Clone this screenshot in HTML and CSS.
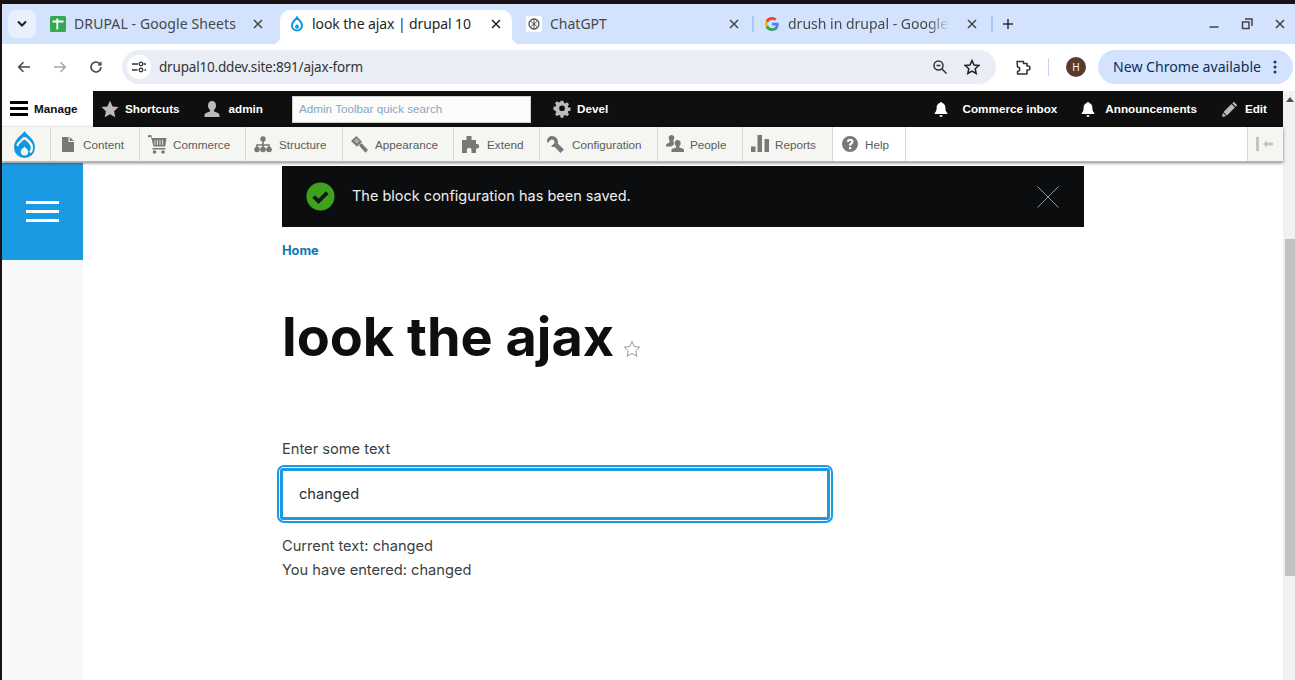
FILE: index.html
```html
<!DOCTYPE html>
<html lang="en">
<head>
<meta charset="utf-8">
<title>look the ajax | drupal 10</title>
<link rel="stylesheet" href="styles.css">
</head>
<body>
<div class="window">
  <header class="tabstrip">
    <button class="tab-search"><svg width="12" height="8" viewBox="0 0 12 8"><path d="M2 1.500l4 4 4-4" fill="none" stroke="#1f1f1f" stroke-width="2"/></svg></button>
    <div class="tab tab-a">
      <svg class="fav" viewBox="0 0 16 16"><rect width="16" height="16" rx="1.500" fill="#34a853"/><path d="M2.500 5.500h11M7.300 2.500v11" stroke="#fff" stroke-width="1.800"/></svg>
      <span class="tab-title">DRUPAL - Google Sheets</span>
      <svg class="tab-x" viewBox="0 0 10 10"><path d="M1 1l8 8M9 1l-8 8" stroke="#444" stroke-width="1.500"/></svg>
    </div>
    <div class="tab tab-b active">
      <svg class="fav" viewBox="0 0 16 16"><path d="M8 1.500c1 2 5 4 5 8a5 5 0 0 1-10 0c0-4 4-6 5-8z" fill="none" stroke="#0f9ae0" stroke-width="2"/><path d="M8 8c.7 1 2 1.500 2 2.800a2 2 0 0 1-4 0C6 9.500 7.300 9 8 8z" fill="#0f9ae0"/></svg>
      <span class="tab-title">look the ajax | drupal 10</span>
      <svg class="tab-x" viewBox="0 0 10 10"><path d="M1 1l8 8M9 1l-8 8" stroke="#222" stroke-width="1.500"/></svg>
    </div>
    <div class="tab tab-c">
      <svg class="fav" viewBox="0 0 16 16"><rect width="16" height="16" rx="2" fill="#fff"/><circle cx="8" cy="8" r="5" fill="none" stroke="#555" stroke-width="1.300"/><path d="M5 5.500l6 5M11 5.500l-6 5M8 3v10" stroke="#555" stroke-width="1"/></svg>
      <span class="tab-title">ChatGPT</span>
      <svg class="tab-x" viewBox="0 0 10 10"><path d="M1 1l8 8M9 1l-8 8" stroke="#444" stroke-width="1.500"/></svg>
    </div>
    <span class="tab-sep"></span>
    <div class="tab tab-d">
      <svg class="fav" viewBox="0 0 16 16"><path d="M14.700 8.200c0-.5 0-1-.1-1.400H8v2.700h3.800a3.200 3.200 0 0 1-1.400 2.100v1.800h2.300c1.300-1.200 2-3 2-5.200z" fill="#4285f4"/><path d="M8 15c1.900 0 3.500-.6 4.700-1.700l-2.300-1.800c-.6.400-1.400.7-2.400.7-1.800 0-3.400-1.200-3.900-2.900H1.700v1.900A7 7 0 0 0 8 15z" fill="#34a853"/><path d="M4.100 9.300a4.200 4.200 0 0 1 0-2.700V4.700H1.700a7 7 0 0 0 0 6.500z" fill="#fbbc05"/><path d="M8 3.800c1 0 2 .4 2.700 1l2-2A7 7 0 0 0 1.700 4.700l2.400 1.900C4.600 5 6.200 3.800 8 3.800z" fill="#ea4335"/></svg>
      <span class="tab-title fade">drush in drupal - Google S</span>
      <svg class="tab-x" viewBox="0 0 10 10"><path d="M1 1l8 8M9 1l-8 8" stroke="#444" stroke-width="1.500"/></svg>
    </div>
    <span class="tab-sep"></span>
    <svg class="new-tab" viewBox="0 0 12 12"><path d="M6 1v10M1 6h10" stroke="#333" stroke-width="1.500"/></svg>
    <div class="win-controls">
      <svg viewBox="0 0 12 12"><path d="M1.500 9h9" stroke="#444" stroke-width="1.500"/></svg>
      <svg viewBox="0 0 12 12"><path d="M4 1h7v7M1.500 4h6.500v6.500H1.500z" fill="none" stroke="#444" stroke-width="1.500"/></svg>
      <svg viewBox="0 0 12 12"><path d="M2 2l8 8M10 2l-8 8" stroke="#444" stroke-width="1.600"/></svg>
    </div>
  </header>

  <nav class="navbar">
    <svg class="nav-btn" viewBox="0 0 16 16"><path d="M14 8H3M7.500 3.200L2.700 8l4.800 4.800" fill="none" stroke="#474747" stroke-width="1.600"/></svg>
    <svg class="nav-btn" viewBox="0 0 16 16"><path d="M2 8h11M8.500 3.200L13.300 8l-4.800 4.800" fill="none" stroke="#a8a8a8" stroke-width="1.600"/></svg>
    <svg class="nav-btn" viewBox="0 0 16 16"><path d="M13 8a5 5 0 1 1-1.500-3.600L13 6" fill="none" stroke="#474747" stroke-width="1.600"/><path d="M13.500 2.300v4.200H9.300z" fill="#474747"/></svg>
    <div class="omnibox">
      <span class="site-chip"><svg viewBox="0 0 14 12" width="14" height="12"><path d="M0 3h6M0 9h5.500M12.500 9H14M11.500 3H14" stroke="#333" stroke-width="1.500"/><circle cx="9" cy="3" r="1.800" fill="none" stroke="#333" stroke-width="1.300"/><circle cx="9" cy="9" r="1.800" fill="none" stroke="#333" stroke-width="1.300"/></svg></span>
      <span class="url">drupal10.ddev.site:891/ajax-form</span>
      <svg class="omni-icon" viewBox="0 0 16 16"><circle cx="6.500" cy="6.500" r="4.500" fill="none" stroke="#333" stroke-width="1.500"/><path d="M10 10l4.500 4.500M4.500 6.500h4" stroke="#333" stroke-width="1.500"/></svg>
      <svg class="omni-icon" viewBox="0 0 16 16"><path d="M8 1.500l2 4.500 4.800.5-3.600 3.200 1 4.800L8 12.100l-4.200 2.400 1-4.800L1.200 6.500 6 6z" fill="none" stroke="#222" stroke-width="1.500"/></svg>
    </div>
    <svg class="ext" viewBox="0 0 16 16"><path d="M2 2.500h6.500V4.500a1.800 1.800 0 0 1 0 0h3.500V7h1a2 2 0 0 1 0 4h-1v4H2.500v-2.500a2.200 2.200 0 0 0 0-4.500z" fill="none" stroke="#333" stroke-width="1.500" stroke-linejoin="round"/></svg>
    <span class="nav-sep"></span>
    <span class="avatar">H</span>
    <div class="update">New Chrome available<svg class="kebab" viewBox="0 0 4 16" width="4" height="16"><circle cx="2" cy="3" r="1.500" fill="#0b3a70"/><circle cx="2" cy="8" r="1.500" fill="#0b3a70"/><circle cx="2" cy="13" r="1.500" fill="#0b3a70"/></svg></div>
  </nav>

  <div class="viewport">
    <div class="page">
      <div class="admin-bar">
        <a class="manage"><svg class="ab-icon" viewBox="0 0 18 15"><path d="M0 1.500h18M0 7.500h18M0 13.500h18" stroke="#000" stroke-width="3" /></svg>Manage</a>
        <a class="ab-item ab-shortcuts"><svg class="ab-icon" viewBox="0 0 18 18"><path d="M9 .8l2.600 5.600 6 .7-4.500 4.100 1.200 6L9 14.200l-5.300 3 1.200-6L.4 7.100l6-.7z" fill="#bbb"/></svg>Shortcuts</a>
        <a class="ab-item ab-admin"><svg class="ab-icon" viewBox="0 0 18 18"><path d="M9 1c2.500 0 4 1.800 4 4.500 0 2-1 3.700-2 4.500v1.500c2 .7 5.500 1.500 5.500 3.500V17H1.500v-2c0-2 3.500-2.800 5.500-3.500V10C6 9.200 5 7.500 5 5.500 5 2.800 6.500 1 9 1z" fill="#bbb"/></svg>admin</a>
        <div class="ab-search">Admin Toolbar quick search</div>
        <a class="ab-item ab-devel"><svg class="ab-icon" viewBox="0 0 18 18"><path d="M7.500 1h3l.4 2.300 1.500.6 1.900-1.300 2.100 2.100-1.300 1.900.6 1.500 2.300.4v3l-2.300.4-.6 1.500 1.300 1.900-2.100 2.100-1.900-1.300-1.500.6-.4 2.300h-3l-.4-2.300-1.500-.6-1.900 1.300-2.100-2.100 1.300-1.900-.6-1.500L0 10.500v-3l2.300-.4.600-1.500L1.600 3.700l2.100-2.100 1.900 1.300 1.500-.6zM9 6a3 3 0 1 0 0 6 3 3 0 0 0 0-6z" fill="#bbb" fill-rule="evenodd" transform="scale(.95) translate(.5 -.3)"/></svg>Devel</a>
        <div class="ab-right">
          <a class="ab-item ab-inbox"><svg class="bell" viewBox="0 0 14 16"><path d="M7 1c.6 0 1 .4 1 1 2.300.5 3.400 2.300 3.400 4.800 0 3 .7 4 1.900 5.200v1H.7v-1c1.200-1.200 1.900-2.200 1.900-5.200C2.600 4.300 3.700 2.500 6 2c0-.6.400-1 1-1zM5.300 14.200h3.400a1.700 1.700 0 0 1-3.400 0z" fill="#fff"/></svg>Commerce inbox</a>
          <a class="ab-item ab-ann"><svg class="bell" viewBox="0 0 14 16"><path d="M7 1c.6 0 1 .4 1 1 2.300.5 3.400 2.300 3.400 4.800 0 3 .7 4 1.900 5.200v1H.7v-1c1.200-1.200 1.900-2.200 1.900-5.200C2.600 4.300 3.700 2.500 6 2c0-.6.400-1 1-1zM5.300 14.200h3.400a1.700 1.700 0 0 1-3.400 0z" fill="#fff"/></svg>Announcements</a>
          <a class="ab-item ab-edit"><svg class="pencil" viewBox="0 0 16 16"><path d="M11.800.8l3.400 3.400-1.500 1.500-3.400-3.400zM9.500 3l3.400 3.400-8 8-3.400-3.400zM.9 11.700l3.300 3.300-4.200 1z" fill="#bbb"/></svg>Edit</a>
        </div>
      </div>

      <div class="tray">
        <div class="tray-logo"><svg width="23" height="29" viewBox="0 0 23 29"><path d="M11.500 1c1.500 3.500 10.500 7.500 10.500 16.500a10.500 10.500 0 0 1-21 0C1 8.500 10 4.500 11.500 1z" fill="#0f9ae0"/><path d="M11.500 7.500c2.500 3 7.500 5 7.500 10 0 2-.8 3.800-2 5" fill="none" stroke="#f5f5f2" stroke-width="2.400"/><path d="M11.500 7.500c-2 2.500-6 4.300-7.300 8.300" fill="none" stroke="#f5f5f2" stroke-width="2.200"/><path d="M11.500 16.500c1 1.600 3.700 2.700 3.700 5.300a3.700 3.700 0 0 1-7.400 0c0-2.600 2.700-3.700 3.700-5.300z" fill="#f5f5f2"/></svg></div>
        <a class="tray-item ti-content"><svg class="ic-doc" viewBox="0 0 12 15"><path d="M0 0h6.500v5H12v10H0zM7.700 0L12 3.900H7.700z" fill="#787878"/></svg>Content</a>
        <a class="tray-item ti-commerce"><svg class="ic-cart" viewBox="0 0 19 20"><path d="M0 1.200l3.200-.2.900 3H18.500l-1.300 8.500H5.500L3 3 0 3.200z" fill="#787878"/><path d="M7 6v5M9.500 6v5M12 6v5M14.500 6v5" stroke="#f5f5f2" stroke-width=".8"/><path d="M4.500 14h13v1.500h-13z" fill="#787878"/><circle cx="6.500" cy="18" r="1.800" fill="#787878"/><circle cx="15" cy="18" r="1.800" fill="#787878"/></svg>Commerce</a>
        <a class="tray-item ti-structure"><svg class="ti" viewBox="0 0 18 18"><circle cx="9" cy="4" r="2.700" fill="#787878"/><path d="M9 5v4M3 14v-4h12v4M9 9v5" fill="none" stroke="#787878" stroke-width="1.600"/><circle cx="3" cy="14.500" r="2.800" fill="#787878"/><circle cx="9" cy="14.500" r="2.800" fill="#787878"/><circle cx="15" cy="14.500" r="2.800" fill="#787878"/></svg>Structure</a>
        <a class="tray-item ti-appearance"><svg class="ic-ham" viewBox="0 0 17 17"><path d="M0 5l5.300-5 5.700 5.800-5 5z" fill="#787878"/><path d="M3 4.600l2.500-2.400 3 3-2.500 2.500z" fill="#b0b0ac"/><path d="M8 9.500l2.400-2.400 6.600 7-2.600 2.700z" fill="#787878"/></svg>Appearance</a>
        <a class="tray-item ti-extend"><svg class="ic-puz" viewBox="0 0 18 17"><path d="M0 4h4.500V0h5v4H14v4h1a2.200 2.200 0 1 1 0 4.400h-1V17H9.500v-3a2.300 2.300 0 0 0-4.600 0v3H0z" fill="#787878"/></svg>Extend</a>
        <a class="tray-item ti-config"><svg class="ic-wrench" viewBox="0 0 17 17"><path d="M5 0a5 5 0 0 0-5 5c0 .8.2 1.500.5 2L4 3.500 7 4l.5 3L4 10.500c.6.300 1.300.5 2 .5.500 0 1-.1 1.500-.3L13.500 17 17 13.500 10.700 7.500c.2-.5.3-1 .3-1.500a6 6 0 0 0-6-6z" fill="#787878"/></svg>Configuration</a>
        <a class="tray-item ti-people"><svg class="ti" viewBox="0 0 18 18"><path d="M11.500 5c2 0 3.200 1.500 3.200 3.300 0 1.400-.7 2.500-1.300 3v1.200c1.500.5 4.600 1 4.600 2.500V17H5.500v-2c0-1.500 3.100-2 4.600-2.500v-1.200c-.6-.5-1.300-1.600-1.300-3C8.800 6.500 9.500 5 11.500 5z" fill="#787878"/><path d="M5.500 0C7 0 8.300 1 8.300 2.800c0 1.200-.5 2.200-1 2.700v1.300l1 .4C7.700 8 7.500 9 7.700 10L5 11.500H0V10c0-1.200 2.400-1.800 3.500-2.200V5.500C3 5 2.700 4 2.700 2.800 2.700 1 4 0 5.500 0z" fill="#787878"/></svg>People</a>
        <a class="tray-item ti-reports"><svg class="ti" viewBox="0 0 18 18"><path d="M0 11.500h4.500V17H0zM6.500 0H11v17H6.500zM13.500 4H18v13h-4.500z" fill="#787878"/></svg>Reports</a>
        <a class="tray-item ti-help"><svg class="ic-help" viewBox="0 0 16 16"><path d="M8 0a8 8 0 1 1 0 16A8 8 0 0 1 8 0zM7 11v2.200h2.200V11zM8.200 2.800C6.200 2.800 5 4 4.800 5.700l2.100.3c.1-.9.600-1.300 1.200-1.300s1.100.4 1.100 1c0 .5-.3.800-1 1.300-.9.700-1.200 1.400-1.200 2.400v.4h2.100v-.2c0-.6.300-.9 1-1.400.9-.7 1.400-1.400 1.400-2.600 0-1.600-1.400-2.800-3.300-2.800z" fill="#787878" fill-rule="evenodd"/></svg>Help</a>
        <div class="tray-fill"></div>
        <div class="tray-toggle"><svg width="18" height="14" viewBox="0 0 18 14"><path d="M0 0h3v14H0z" fill="#c4c4c4"/><path d="M7 7l4-3.500V5.500h6v3h-6v2z" fill="#c4c4c4"/></svg></div>
      </div>

      <div class="content-row">
        <aside class="sidebar">
          <div class="burger"><span></span><span></span><span></span></div>
        </aside>
        <main class="main">
          <div class="message">
            <svg class="msg-check" viewBox="0 0 30 30"><circle cx="15" cy="15" r="14.500" fill="#3fa21c"/><path d="M8 15l5 5 9-9" fill="none" stroke="#14181a" stroke-width="4"/></svg>
            <span class="msg-text">The block configuration has been saved.</span>
            <svg class="msg-close" viewBox="0 0 22 22"><path d="M.5.5l21 21M21.500.5l-21 21" stroke="#8a9aa6" stroke-width="1"/></svg>
          </div>
          <a class="crumb">Home</a>
          <div class="title-row">
            <h1>look the ajax</h1>
            <svg class="title-star" viewBox="0 0 18 18"><path d="M9 1.500l2.300 5 5.400.6-4 3.700 1.100 5.400L9 13.400l-4.800 2.800 1.100-5.400-4-3.700 5.400-.6z" fill="#fff" stroke="#9a9a8c" stroke-width="1"/></svg>
          </div>
          <label class="field-label" for="t">Enter some text</label>
          <div class="focus-ring"><input id="t" class="field" type="text" value="changed"></div>
          <p class="result first">Current text: changed</p>
          <p class="result">You have entered: changed</p>
        </main>
      </div>
    </div>
    <div class="scrollbar">
      <svg class="sb-up" width="8" height="5" viewBox="0 0 8 5"><path d="M0 5l4-5 4 5z" fill="#505050"/></svg>
      <div class="sb-thumb"></div>
    </div>
  </div>
</div>
</body>
</html>
```
FILE: styles.css
```css
* { box-sizing: border-box; }
html, body { margin: 0; height: 100%; overflow: hidden; }
body { background: #1a1112; padding: 4px 0 0 2px; font-family: "Liberation Sans", Arial, sans-serif; }
a { text-decoration: none; color: inherit; }
.window { height: 676px; display: flex; flex-direction: column; background: #fff; }

/* Tab strip */
.tabstrip { height: 40px; background: #d3e3fd; display: flex; align-items: flex-end; font-family: "Noto Sans", sans-serif; font-size: 14px; color: #474747; flex: none; }
.tab-search { width: 28px; height: 28px; margin: 0 0 6px 6px; border: 0; border-radius: 8px; background: #e8f0fe; display: flex; align-items: center; justify-content: center; padding: 0; }
.tab { height: 34px; display: flex; align-items: center; gap: 8px; padding: 0 9px 6px 0; flex: none; }
.tab-a { width: 232px; margin-left: 6px; padding-left: 8px; }
.tab-b { width: 232px; margin-left: 6px; padding-left: 9px; }
.tab-c { width: 234px; margin-left: 6px; padding-left: 8px; padding-right: 11px; }
.tab-d { width: 235px; margin-left: 2px; padding-left: 8px; padding-right: 12px; }
.active { background: #fff; border-radius: 10px 10px 0 0; color: #1f1f1f; position: relative; }
.active::before, .active::after { content: ""; position: absolute; bottom: 0; width: 8px; height: 8px; }
.active::before { left: -8px; background: radial-gradient(circle at 0 0, transparent 8px, #fff 8.5px); }
.active::after { right: -8px; background: radial-gradient(circle at 100% 0, transparent 8px, #fff 8.5px); }
.fav { width: 16px; height: 16px; flex: none; }
.tab-title { flex: 1; min-width: 0; overflow: hidden; white-space: nowrap; padding-bottom: 2px; }
.tab-a .tab-title { letter-spacing: .1px; }
.tab-b .tab-title { letter-spacing: -.1px; margin-left: -1px; }
.tab-title.fade { overflow: visible; -webkit-mask-image: linear-gradient(to right, #000 140px, transparent 162px); mask-image: linear-gradient(to right, #000 140px, transparent 162px); }
.tab-x { width: 10px; height: 10px; flex: none; margin-right: 2px; }
.tab-sep { width: 2px; height: 16px; background: #a8c7fa; margin-bottom: 12px; flex: none; }
.new-tab { width: 12px; height: 12px; margin: 0 0 14px 9px; flex: none; }
.win-controls { display: flex; gap: 21px; margin: 0 0 14px auto; padding-right: 9px; }
.win-controls svg { width: 12px; height: 12px; }

/* Nav bar */
.navbar { height: 47px; display: flex; align-items: center; background: #fff; padding: 0 0 1px 14px; flex: none; font-family: "Noto Sans", sans-serif; font-size: 14px; }
.nav-btn { width: 16px; height: 16px; margin-right: 20px; flex: none; }
.nav-btn:nth-child(3) { margin-right: 18px; }
.omnibox { width: 874px; height: 34px; background: #e9eef6; border-radius: 17px; display: flex; align-items: center; padding: 0 16px 0 5px; color: #1f1f1f; }
.site-chip { width: 24px; height: 24px; border-radius: 50%; background: #fff; display: flex; align-items: center; justify-content: center; flex: none; }
.url { margin-left: 8px; flex: 1; color: #333; font-size: 13.5px; letter-spacing: -.19px; }
.omni-icon { width: 16px; height: 16px; margin-left: 16px; flex: none; }
.ext { width: 16px; height: 16px; margin-left: 19px; flex: none; }
.nav-sep { width: 1px; height: 18px; background: #c4d4ec; margin-left: 17px; }
.avatar { width: 20px; height: 20px; border-radius: 50%; background: #5a3a2e; color: #fff; font-size: 10px; display: flex; align-items: center; justify-content: center; margin-left: 17px; flex: none; }
.update { width: 195px; height: 34px; margin-left: 12px; background: #d3e3fd; border-radius: 17px; display: flex; align-items: center; justify-content: space-between; padding: 0 16px 2px 15px; color: #0b2f5c; font-size: 14.1px; }
.kebab { margin-top: 2px; }

/* Viewport */
.viewport { flex: 1; min-height: 0; display: flex; }
.page { flex: 1; min-width: 0; display: flex; flex-direction: column; }
.scrollbar { width: 12px; background: #f1f1f1; display: flex; flex-direction: column; align-items: flex-end; flex: none; }
.sb-up { margin: 6px 1px 0 0; }
.sb-thumb { width: 10px; height: 337px; background: #c1c1c1; margin-top: 137px; }

/* Admin toolbar */
.admin-bar { height: 36px; background: #0f0f0f; display: flex; align-items: center; color: #fff; font-size: 11.7px; font-weight: 700; flex: none; }
.manage { width: 91px; height: 36px; background: #fff; color: #0f0f0f; display: flex; align-items: center; padding: 0 0 1px 8px; gap: 6px; }
.ab-item { display: flex; align-items: center; gap: 6px; padding-bottom: 1px; }
.ab-icon { width: 18px; height: 18px; flex: none; }
.manage .ab-icon { height: 15px; }
.ab-shortcuts { margin-left: 8px; }
.ab-admin { margin-left: 23px; gap: 8px; }
.ab-search { width: 239px; height: 27px; margin-left: 29px; background: #fcfcfa; border: 1px solid #cfcfcf; font-weight: 400; color: #86a6c6; font-size: 11.7px; display: flex; align-items: center; padding: 0 0 1px 6px; }
.ab-devel { margin-left: 22px; }
.ab-right { margin-left: auto; display: flex; align-items: center; padding-right: 16px; }
.bell { width: 14px; height: 16px; flex: none; }
.ab-inbox { gap: 15px; }
.ab-ann { gap: 10px; margin-left: 24px; }
.pencil { width: 16px; height: 16px; flex: none; }
.ab-edit { gap: 7px; margin-left: 25px; }

/* Tray */
.tray { height: 35px; background: #fff; display: flex; align-items: stretch; box-shadow: 0 1px 3px rgba(0,0,0,.5); border-bottom: 1px solid #b8b8b0; position: relative; flex: none; font-size: 11.7px; color: #5c5c5c; }
.tray-logo { width: 49px; background: #f5f5f2; border-right: 1px solid #d8d8d2; display: flex; align-items: center; justify-content: center; padding-right: 4px; }
.tray-item { display: flex; align-items: center; gap: 7px; background: #f5f5f2; border-right: 1px solid #d8d8d2; padding: 0 0 0 8px; }
.ti { width: 18px; height: 18px; flex: none; }
.ic-doc { width: 12px; height: 15px; flex: none; }
.ic-cart { width: 19px; height: 20px; flex: none; }
.ic-ham, .ic-wrench { width: 17px; height: 17px; flex: none; }
.ic-puz { width: 18px; height: 17px; flex: none; }
.ic-help { width: 16px; height: 16px; flex: none; }
.ti-content { width: 89px; padding-left: 11px; gap: 9px; }
.ti-commerce { width: 106px; gap: 6px; }
.ti-structure { width: 97px; }
.ti-appearance { width: 111px; }
.ti-extend { width: 86px; }
.ti-config { width: 118px; padding-left: 7px; gap: 8px; }
.ti-people { width: 85px; gap: 6px; }
.ti-reports { width: 90px; gap: 6px; }
.ti-help { width: 73px; background: #fff; padding-left: 9px; }
.tray-fill { flex: 1; }
.tray-toggle { width: 36px; background: #f5f5f2; border-left: 1px solid #d8d8d2; display: flex; align-items: center; padding-left: 8px; }

/* Content */
.content-row { flex: 1; min-height: 0; display: flex; }
.sidebar { width: 81px; background: #f7f9f9; flex: none; }
.burger { height: 97px; margin-top: 1px; background: #1b9ae4; display: flex; flex-direction: column; align-items: center; justify-content: center; gap: 6px; }
.burger span { width: 33px; height: 3px; background: #fff; }
.main { flex: 1; min-width: 0; padding: 4px 0 0 199px; font-family: Inter, sans-serif; color: #3b3f44; font-size: 14.65px; }
.message { width: 802px; height: 61px; background: #0c0d0e; display: flex; align-items: center; padding: 0 25px 0 24px; color: #f0f0f0; }
.msg-check { width: 29px; height: 29px; flex: none; }
.msg-text { margin-left: 17px; flex: 1; font-size: 14.5px; padding-bottom: 2px; }
.msg-close { width: 22px; height: 22px; flex: none; }
.crumb { display: block; margin-top: 16px; font-size: 12.8px; line-height: 16px; font-weight: 700; color: #0d77b7; }
.title-row { display: flex; align-items: flex-end; margin-top: 40px; height: 76px; }
h1 { margin: 0; font-size: 54px; line-height: 76px; font-weight: 700; color: #0d0e0f; }
.title-star { width: 18px; height: 18px; margin: 0 0 17px 9px; flex: none; }
.field-label { display: block; margin-top: 64px; line-height: 20px; }
.focus-ring { width: 556px; height: 58px; margin: 6px 0 0 -5px; border: 2px solid #1b9ae4; border-radius: 7px; padding: 1px; background: #fff; }
.field { display: block; width: 100%; height: 100%; border: 3px solid #1b9ae4; border-radius: 3px; padding: 0 16px; font: inherit; font-size: 14.6px; color: #2a2d30; outline: 0; background: #fff; }
.result { margin: 0; line-height: 24px; }
.first { margin-top: 11px; }
```
